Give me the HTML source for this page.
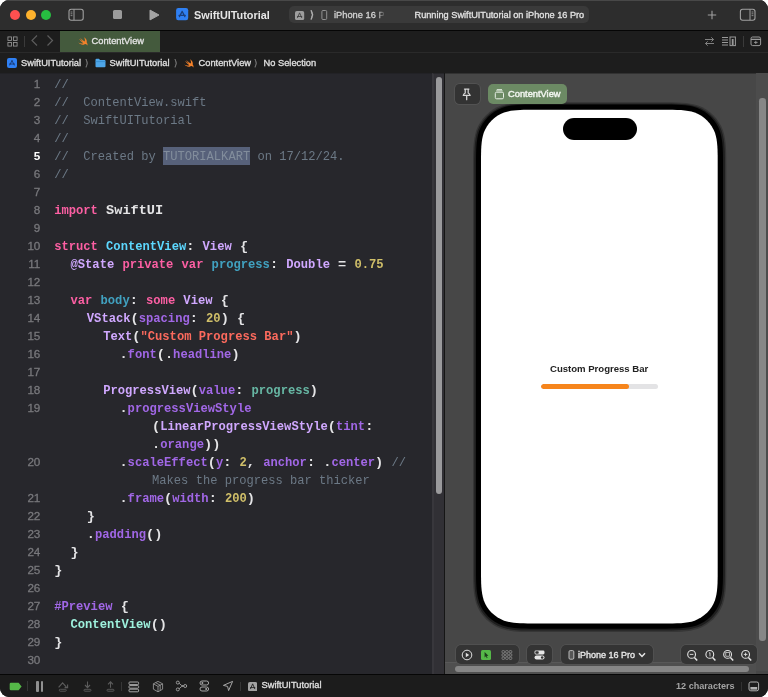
<!DOCTYPE html>
<html><head><meta charset="utf-8">
<style>
html,body{margin:0;padding:0;background:#fff;}
body{width:768px;height:697px;overflow:hidden;position:relative;font-family:"Liberation Sans",sans-serif;}
#win{position:absolute;left:0;top:0;width:768px;height:697px;border-radius:9px;overflow:hidden;background:#1c1c1c;}
.abs{position:absolute;}
#title{left:0;top:0;width:768px;height:30px;background:#2d2d2d;border-top:1px solid #484848;box-sizing:border-box}
#tsep{left:0;top:30px;width:768px;height:1px;background:#050505;}
#tabbar{left:0;top:31px;width:768px;height:21px;background:#1d1d1d;}
#tab{left:59.5px;top:31px;width:100.5px;height:21px;background:#445a3d;}
#crumb{left:0;top:52px;width:768px;height:21px;background:#1d1d1d;border-top:1px solid #2a2a2a;box-sizing:border-box;}
#editor{left:0;top:73px;width:432px;height:600.5px;background:#27272c;border-top:1px solid #222226;box-sizing:border-box}
#gutter2{left:432px;top:73px;width:12.5px;height:600.5px;background:#313035;border-top:1px solid #262629;border-left:2px solid #38373c;box-sizing:border-box}
#split{left:444.3px;top:73px;width:1px;height:600.5px;background:#161616;}
#canvas{left:445px;top:73px;width:323px;height:600.5px;background:#474747;border-top:1px solid #323232;box-sizing:border-box}
#bottom{left:0;top:673.5px;width:768px;height:23.5px;background:#1c1c1c;border-top:1px solid #060606;box-sizing:border-box}
.t{position:absolute;white-space:pre;line-height:1;-webkit-text-stroke-width:0.3px}
pre{margin:0;}
#code{left:0;top:76px;font-family:"Liberation Mono",monospace;font-size:12px;line-height:18px;color:#dfdfe0;position:absolute;}
.ln{position:absolute;left:0;width:39.9px;text-align:right;color:#78787c;font-family:"Liberation Sans",sans-serif;font-size:11.7px;line-height:18px;letter-spacing:-0.25px;margin-top:-0.8px;-webkit-text-stroke-width:0.3px}
.cl{margin-top:0px;position:absolute;left:54.2px;white-space:pre;font-family:"Liberation Mono",monospace;font-size:13.6px;line-height:18px;color:#e4e4e6;font-weight:bold}
.cl span{font-size:12.15px}
.cl span.c{font-size:12.1px}
.cl span span{font-size:inherit}
.k{color:#fc5fa3;font-weight:bold}
.c{color:#6c7986;font-weight:normal}
.s{color:#fc6a5d}
.n{color:#d0bf69}
.td{color:#5dd8ff}
.od{color:#41a1c0}
.pt{color:#9ef1dd}
.pv{color:#67b7a4}
.st{color:#d0a8ff}
.sf{color:#a167e6}
.pp{color:#fd8f3f}
.b{font-weight:bold}
.sel{color:#828d9c}
.cur{color:#fff !important;font-weight:bold;-webkit-text-stroke-width:0 !important}
.pp2{color:#a167e6}
.tb{background:#343434;border-radius:5px;box-shadow:0 0 0 0.8px #545454}
.t,.cl,.ln{will-change:opacity}
</style></head><body>
<div id="win">
<div class="abs" id="title"></div>
<div class="abs" id="tsep"></div>
<div class="abs" id="tabbar"></div>
<div class="abs" id="tab"></div>
<div class="abs" id="crumb"></div>
<div class="abs" id="editor"></div>
<div class="abs" id="gutter2"></div>
<div class="abs" id="split"></div>
<div class="abs" id="canvas"></div>
<div class="abs" id="bottom"></div>
<!-- traffic lights -->
<div class="abs" style="left:10px;top:10px;width:10px;height:10px;border-radius:50%;background:#fe5050"></div>
<div class="abs" style="left:26px;top:10px;width:10px;height:10px;border-radius:50%;background:#fdb12d"></div>
<div class="abs" style="left:41px;top:10px;width:10px;height:10px;border-radius:50%;background:#27bd41"></div>
<!-- sidebar icon -->
<svg class="abs" style="left:67.7px;top:8px" width="17" height="14" viewBox="0 0 17 14"><rect x="1" y="1.2" width="14.2" height="11" rx="2.2" fill="none" stroke="#a0a0a0" stroke-width="1.1"/><line x1="6" y1="1.2" x2="6" y2="12.2" stroke="#a0a0a0" stroke-width="1"/><line x1="2.6" y1="4" x2="4.4" y2="4" stroke="#a0a0a0" stroke-width="0.8"/><line x1="2.6" y1="5.8" x2="4.4" y2="5.8" stroke="#a0a0a0" stroke-width="0.8"/><line x1="2.6" y1="7.6" x2="4.4" y2="7.6" stroke="#a0a0a0" stroke-width="0.8"/></svg>
<!-- stop -->
<div class="abs" style="left:113px;top:10.2px;width:9.2px;height:9.3px;border-radius:1.5px;background:#9b9b9b"></div>
<!-- play -->
<svg class="abs" style="left:148px;top:8px" width="14" height="14" viewBox="0 0 14 14"><path d="M2 2.1 L11 7 L2 11.9 Z" fill="#a3a3a3" stroke="#a3a3a3" stroke-width="1" stroke-linejoin="round"/></svg>
<!-- app icon -->
<svg class="abs" style="left:176px;top:8.3px" width="13" height="13" viewBox="0 0 13 13"><rect x="0.1" y="0.1" width="12.1" height="12.1" rx="2.2" fill="#2f80f3"/><path d="M6.15 3.4 L3.4 8.6 M6.15 3.4 L8.9 8.6 M3 7.4 L9.3 7.4" stroke="#1b3f7c" stroke-width="1.2" fill="none" stroke-linecap="round"/></svg>
<div class="t" style="left:194px;top:10px;font-size:10.85px;font-weight:bold;-webkit-text-stroke-width:0;color:#e6e6e6;">SwiftUITutorial</div>
<!-- scheme pill -->
<div class="abs" style="left:288.5px;top:6px;width:300.5px;height:17px;border-radius:5px;background:#3a3a3a"></div>
<svg class="abs" style="left:295.4px;top:10.6px" width="9.2" height="9.2" viewBox="0 0 10 10"><rect x="0" y="0" width="10" height="10" rx="2" fill="#9e9e9e"/><path d="M5 2 L2.6 7.6 M5 2 L7.4 7.6 M2.2 6 L7.8 6" stroke="#3a3a3a" stroke-width="0.9" fill="none"/></svg>
<div class="t" style="left:310px;top:10px;font-size:9.5px;color:#b4b4b4;-webkit-text-stroke-width:0.5px">⟩</div>
<svg class="abs" style="left:321px;top:10px" width="7" height="10" viewBox="0 0 7 10"><rect x="0.9" y="0.5" width="4.8" height="9" rx="1.1" fill="none" stroke="#9c9c9c" stroke-width="0.9"/></svg>
<div class="abs" style="left:334px;top:7px;width:50px;height:16px;overflow:hidden;-webkit-mask-image:linear-gradient(90deg,#000 86%,rgba(0,0,0,0.2) 100%);mask-image:linear-gradient(90deg,#000 86%,rgba(0,0,0,0.2) 100%)"><div class="t" style="left:0;top:3.5px;font-size:9.3px;color:#d2d2d2;">iPhone 16 Pro</div></div>
<div class="t" style="left:414.5px;top:10.5px;font-size:9.2px;color:#e2e2e2;">Running SwiftUITutorial on iPhone 16 Pro</div>
<!-- plus -->
<svg class="abs" style="left:707px;top:10px" width="10" height="10" viewBox="0 0 10 10"><path d="M5 0.8 V9.2 M0.8 5 H9.2" stroke="#a0a0a0" stroke-width="1.1"/></svg>
<!-- right sidebar icon -->
<svg class="abs" style="left:739px;top:8px" width="18" height="14" viewBox="0 0 18 14"><rect x="1.4" y="1.2" width="14.6" height="11" rx="2.2" fill="none" stroke="#a0a0a0" stroke-width="1.1"/><line x1="11" y1="1.2" x2="11" y2="12.2" stroke="#a0a0a0" stroke-width="1"/><line x1="12.6" y1="4" x2="14.4" y2="4" stroke="#a0a0a0" stroke-width="0.8"/><line x1="12.6" y1="5.8" x2="14.4" y2="5.8" stroke="#a0a0a0" stroke-width="0.8"/><line x1="12.6" y1="7.6" x2="14.4" y2="7.6" stroke="#a0a0a0" stroke-width="0.8"/></svg>

<!-- tab bar -->
<svg class="abs" style="left:6.6px;top:35.7px" width="11" height="11" viewBox="0 0 12 12"><g fill="none" stroke="#9a9a9a" stroke-width="0.9"><rect x="1" y="1" width="4" height="4"/><rect x="7" y="1" width="4" height="4"/><rect x="1" y="7" width="4" height="4"/><rect x="7" y="7" width="4" height="4"/></g></svg>
<div class="abs" style="left:24px;top:36px;width:1px;height:11px;background:#3a3a3a"></div>
<svg class="abs" style="left:30px;top:34px" width="26" height="13" viewBox="0 0 26 13"><path d="M7 1.5 L2 6.5 L7 11.5 M17.5 1.5 L22.5 6.5 L17.5 11.5" fill="none" stroke="#5c5c5c" stroke-width="1.2"/></svg>
<svg class="abs swift" style="left:78.3px;top:37px" width="10" height="9" viewBox="0 0 10 9"><path d="M0.3 5.6 C2.2 7.6 4.8 8.3 6.6 7.2 C7.6 6.9 8.6 7.4 9.4 8.4 C9.7 7.2 9.3 6.2 8.7 5.5 C9.3 3.4 8 1.3 6 0.2 C7 1.8 7.2 3.3 6.7 4.5 C5.2 3.6 3.4 2.2 2 0.8 C2.9 2.3 4 3.6 5.2 4.8 C3.8 4 2.2 2.9 1 1.8 C2.2 3.6 3.6 5 5.4 6.3 C3.8 6.9 1.9 6.6 0.3 5.6 Z" fill="#f5822a"/></svg>
<div class="t" style="left:91.5px;top:37px;font-size:9.3px;color:#e4e4e4;">ContentView</div>
<!-- tab bar right icons -->
<svg class="abs" style="left:703px;top:36px" width="13" height="11" viewBox="0 0 13 11"><path d="M2 3.5 H10.5 M8.3 1.3 L10.5 3.5 L8.3 5.7 M11 7.5 H2.5 M4.7 5.3 L2.5 7.5 L4.7 9.7" fill="none" stroke="#8c8c8c" stroke-width="0.9"/></svg>
<svg class="abs" style="left:721px;top:36px" width="16" height="11" viewBox="0 0 16 11"><path d="M1 1.5 H7 M1 4 H7 M1 6.5 H7 M1 9 H7" stroke="#9a9a9a" stroke-width="1"/><rect x="9" y="1" width="5.4" height="8.6" fill="none" stroke="#9a9a9a" stroke-width="1"/><rect x="10.8" y="3" width="1.8" height="6" fill="#9a9a9a"/></svg>
<div class="abs" style="left:743px;top:36px;width:1px;height:11px;background:#3a3a3a"></div>
<svg class="abs" style="left:750px;top:36px" width="12" height="11" viewBox="0 0 12 11"><rect x="1" y="1" width="9.6" height="8.6" rx="1.6" fill="none" stroke="#9a9a9a" stroke-width="1"/><path d="M1 3.4 H10.6" stroke="#9a9a9a" stroke-width="1.2"/><path d="M4 6.4 H7.6 M5.8 4.8 V8" stroke="#9a9a9a" stroke-width="0.9"/></svg>

<!-- breadcrumb -->
<svg class="abs" style="left:7px;top:58px" width="10" height="10" viewBox="0 0 10 10"><rect x="0" y="0" width="10" height="10" rx="2" fill="#2f80f3"/><path d="M5 2.6 L2.8 7 M5 2.6 L7.2 7 M2.4 6 L7.6 6" stroke="#1b3f7c" stroke-width="1" fill="none" stroke-linecap="round"/></svg>
<div class="t" style="left:21px;top:58.5px;font-size:9.3px;color:#e0e0e0;">SwiftUITutorial</div>
<div class="t" style="left:85px;top:58.5px;font-size:9px;color:#7a7a7a;">⟩</div>
<svg class="abs" style="left:95px;top:58px" width="11" height="10" viewBox="0 0 11 10"><path d="M0.5 1.8 Q0.5 0.8 1.5 0.8 H4 L5 2 H9.5 Q10.5 2 10.5 3 V8.2 Q10.5 9.2 9.5 9.2 H1.5 Q0.5 9.2 0.5 8.2 Z" fill="#4ea6e8"/><path d="M0.5 3.6 H10.5" stroke="#2a7fc0" stroke-width="0.6"/></svg>
<div class="t" style="left:109.5px;top:58.5px;font-size:9.3px;color:#e0e0e0;">SwiftUITutorial</div>
<div class="t" style="left:174px;top:58.5px;font-size:9px;color:#7a7a7a;">⟩</div>
<svg class="abs swift" style="left:184px;top:59px" width="10" height="9" viewBox="0 0 10 9"><path d="M0.3 5.6 C2.2 7.6 4.8 8.3 6.6 7.2 C7.6 6.9 8.6 7.4 9.4 8.4 C9.7 7.2 9.3 6.2 8.7 5.5 C9.3 3.4 8 1.3 6 0.2 C7 1.8 7.2 3.3 6.7 4.5 C5.2 3.6 3.4 2.2 2 0.8 C2.9 2.3 4 3.6 5.2 4.8 C3.8 4 2.2 2.9 1 1.8 C2.2 3.6 3.6 5 5.4 6.3 C3.8 6.9 1.9 6.6 0.3 5.6 Z" fill="#f5822a"/></svg>
<div class="t" style="left:198.5px;top:58.5px;font-size:9.3px;color:#e0e0e0;">ContentView</div>
<div class="t" style="left:254px;top:58.5px;font-size:9px;color:#7a7a7a;">⟩</div>
<div class="t" style="left:263.5px;top:58.5px;font-size:9.3px;color:#e0e0e0;">No Selection</div>

<!-- selection -->
<div class="abs" style="left:163.2px;top:147px;width:87px;height:18px;background:#57617a"></div>

<div class="ln" style="top:76px">1</div>
<div class="cl" style="top:76px"><span class="c">//</span></div>
<div class="ln" style="top:94px">2</div>
<div class="cl" style="top:94px"><span class="c">//  ContentView.swift</span></div>
<div class="ln" style="top:112px">3</div>
<div class="cl" style="top:112px"><span class="c">//  SwiftUITutorial</span></div>
<div class="ln" style="top:130px">4</div>
<div class="cl" style="top:130px"><span class="c">//</span></div>
<div class="ln cur" style="top:148px">5</div>
<div class="cl" style="top:148px"><span class="c">//  Created by <span class="sel">TUTORIALKART</span> on 17/12/24.</span></div>
<div class="ln" style="top:166px">6</div>
<div class="cl" style="top:166px"><span class="c">//</span></div>
<div class="ln" style="top:184px">7</div>
<div class="ln" style="top:202px">8</div>
<div class="cl" style="top:202px"><span class="k">import</span> SwiftUI</div>
<div class="ln" style="top:220px">9</div>
<div class="ln" style="top:238px">10</div>
<div class="cl" style="top:238px"><span class="k">struct</span> <span class="td">ContentView</span>: <span class="st">View</span> {</div>
<div class="ln" style="top:256px">11</div>
<div class="cl" style="top:256px">  <span class="st">@State</span> <span class="k">private</span> <span class="k">var</span> <span class="od">progress</span>: <span class="st">Double</span> = <span class="n">0.75</span></div>
<div class="ln" style="top:274px">12</div>
<div class="ln" style="top:292px">13</div>
<div class="cl" style="top:292px">  <span class="k">var</span> <span class="od">body</span>: <span class="k">some</span> <span class="st">View</span> {</div>
<div class="ln" style="top:310px">14</div>
<div class="cl" style="top:310px">    <span class="st">VStack</span>(<span class="sf">spacing</span>: <span class="n">20</span>) {</div>
<div class="ln" style="top:328px">15</div>
<div class="cl" style="top:328px">      <span class="st">Text</span>(<span class="s">"Custom Progress Bar"</span>)</div>
<div class="ln" style="top:346px">16</div>
<div class="cl" style="top:346px">        .<span class="sf">font</span>(.<span class="sf">headline</span>)</div>
<div class="ln" style="top:364px">17</div>
<div class="ln" style="top:382px">18</div>
<div class="cl" style="top:382px">      <span class="st">ProgressView</span>(<span class="sf">value</span>: <span class="pv">progress</span>)</div>
<div class="ln" style="top:400px">19</div>
<div class="cl" style="top:400px">        .<span class="sf">progressViewStyle</span></div>
<div class="cl" style="top:418px">            (<span class="st">LinearProgressViewStyle</span>(<span class="sf">tint</span>:</div>
<div class="cl" style="top:436px">            .<span class="sf">orange</span>))</div>
<div class="ln" style="top:454px">20</div>
<div class="cl" style="top:454px">        .<span class="sf">scaleEffect</span>(<span class="sf">y</span>: <span class="n">2</span>, <span class="sf">anchor</span>: .<span class="sf">center</span>) <span class="c">//</span></div>
<div class="cl" style="top:472px">            <span class="c">Makes the progress bar thicker</span></div>
<div class="ln" style="top:490px">21</div>
<div class="cl" style="top:490px">        .<span class="sf">frame</span>(<span class="sf">width</span>: <span class="n">200</span>)</div>
<div class="ln" style="top:508px">22</div>
<div class="cl" style="top:508px">    }</div>
<div class="ln" style="top:526px">23</div>
<div class="cl" style="top:526px">    .<span class="sf">padding</span>()</div>
<div class="ln" style="top:544px">24</div>
<div class="cl" style="top:544px">  }</div>
<div class="ln" style="top:562px">25</div>
<div class="cl" style="top:562px">}</div>
<div class="ln" style="top:580px">26</div>
<div class="ln" style="top:598px">27</div>
<div class="cl" style="top:598px"><span class="pp2">#Preview</span> {</div>
<div class="ln" style="top:616px">28</div>
<div class="cl" style="top:616px">  <span class="pt">ContentView</span>()</div>
<div class="ln" style="top:634px">29</div>
<div class="cl" style="top:634px">}</div>
<div class="ln" style="top:652px">30</div>
<!-- editor scrollbar -->
<div class="abs" style="left:435.6px;top:77px;width:6.5px;height:416.5px;border-radius:3.25px;background:#9a9a9c"></div>

<!-- phone -->
<svg class="abs" style="left:470px;top:100px" width="260" height="536" viewBox="0 0 260 536"><path d="M71.03 2.20 L188.27 2.20 C207.86 2.20 217.66 2.20 228.20 5.53 C239.71 9.72 248.78 18.79 252.97 30.30 C256.30 40.84 256.30 50.64 256.30 70.23 L256.30 463.97 C256.30 483.56 256.30 493.36 252.97 503.90 C248.78 515.41 239.71 524.48 228.20 528.67 C217.66 532.00 207.86 532.00 188.27 532.00 L71.03 532.00 C51.44 532.00 41.64 532.00 31.10 528.67 C19.59 524.48 10.52 515.41 6.33 503.90 C3.00 493.36 3.00 483.56 3.00 463.97 L3.00 70.23 C3.00 50.64 3.00 40.84 6.33 30.30 C10.52 18.79 19.59 9.72 31.10 5.53 C41.64 2.20 51.44 2.20 71.03 2.20 Z" fill="#363636"/><path d="M70.80 3.40 L188.40 3.40 C207.55 3.40 217.12 3.40 227.43 6.66 C238.68 10.75 247.55 19.62 251.64 30.87 C254.90 41.18 254.90 50.75 254.90 69.90 L254.90 464.10 C254.90 483.25 254.90 492.82 251.64 503.13 C247.55 514.38 238.68 523.25 227.43 527.34 C217.12 530.60 207.55 530.60 188.40 530.60 L70.80 530.60 C51.65 530.60 42.08 530.60 31.77 527.34 C20.52 523.25 11.65 514.38 7.56 503.13 C4.30 492.82 4.30 483.25 4.30 464.10 L4.30 69.90 C4.30 50.75 4.30 41.18 7.56 30.87 C11.65 19.62 20.52 10.75 31.77 6.66 C42.08 3.40 51.65 3.40 70.80 3.40 Z" fill="#1e1e1e"/><path d="M69.90 4.50 L189.10 4.50 C207.50 4.50 216.70 4.50 226.60 7.63 C237.42 11.57 245.93 20.08 249.87 30.90 C253.00 40.80 253.00 50.00 253.00 68.40 L253.00 464.80 C253.00 483.20 253.00 492.40 249.87 502.30 C245.93 513.12 237.42 521.63 226.60 525.57 C216.70 528.70 207.50 528.70 189.10 528.70 L69.90 528.70 C51.50 528.70 42.30 528.70 32.40 525.57 C21.58 521.63 13.07 513.12 9.13 502.30 C6.00 492.40 6.00 483.20 6.00 464.80 L6.00 68.40 C6.00 50.00 6.00 40.80 9.13 30.90 C13.07 20.08 21.58 11.57 32.40 7.63 C42.30 4.50 51.50 4.50 69.90 4.50 Z" fill="#000"/><path d="M66.80 9.80 L191.90 9.80 C207.97 9.80 216.00 9.80 224.65 12.53 C234.09 15.97 241.53 23.41 244.97 32.85 C247.70 41.50 247.70 49.53 247.70 65.60 L247.70 467.60 C247.70 483.67 247.70 491.70 244.97 500.35 C241.53 509.79 234.09 517.23 224.65 520.67 C216.00 523.40 207.97 523.40 191.90 523.40 L66.80 523.40 C50.73 523.40 42.70 523.40 34.05 520.67 C24.61 517.23 17.17 509.79 13.73 500.35 C11.00 491.70 11.00 483.67 11.00 467.60 L11.00 65.60 C11.00 49.53 11.00 41.50 13.73 32.85 C17.17 23.41 24.61 15.97 34.05 12.53 C42.70 9.80 50.73 9.80 66.80 9.80 Z" fill="#fff"/></svg>
<div class="abs" style="left:562.5px;top:118px;width:74px;height:22px;border-radius:11px;background:#000;"></div>
<div class="t" style="left:550px;top:363.6px;font-size:9.6px;font-weight:bold;-webkit-text-stroke-width:0;letter-spacing:-0.02px;color:#222;">Custom Progress Bar</div>
<div class="abs" style="left:540.6px;top:384.2px;width:117.8px;height:5px;border-radius:2.5px;background:#e3e3e5;overflow:hidden"><div style="width:75.4%;height:100%;background:#f6851c;border-radius:2.5px"></div></div>
<!-- preview: pin -->
<div class="abs" style="left:455.3px;top:84px;width:24.8px;height:19.8px;border-radius:4.5px;background:#333;box-shadow:0 0 0 0.7px #575757"></div>
<svg class="abs" style="left:461.3px;top:87.8px" width="11.4" height="13" viewBox="0 0 12 14"><path d="M3.6 1.2 H8.4 M4.4 1.2 V5.4 M7.6 1.2 V5.4 M4.4 5.4 Q2.6 6.2 2.4 8 H9.6 Q9.4 6.2 7.6 5.4 M6 8 V12.6" fill="none" stroke="#d6d6d6" stroke-width="1.35" stroke-linecap="round"/></svg>
<!-- ContentView chip -->
<div class="abs" style="left:488px;top:84px;width:79px;height:20px;border-radius:5px;background:#6c8a64"></div>
<svg class="abs" style="left:494px;top:88px" width="11" height="12" viewBox="0 0 11 12"><rect x="1.3" y="4.2" width="8.2" height="6.6" rx="1.3" fill="none" stroke="#e8efe6" stroke-width="1"/><path d="M2.2 2.8 H8.6 M2.8 1.5 H8" stroke="#dfe8dc" stroke-width="0.9"/></svg>
<div class="t" style="left:508px;top:89.5px;font-size:9.3px;-webkit-text-stroke-width:0.45px;color:#f0f4ee;">ContentView</div>
<!-- canvas scrollbar -->
<div class="abs" style="left:756px;top:73px;width:12px;height:598px;background:#4c4c4c"></div>
<div class="abs" style="left:759px;top:98px;width:6.5px;height:543px;border-radius:3.2px;background:#878787"></div>
<!-- bottom horizontal scrollbar -->
<div class="abs" style="left:445px;top:662px;width:311px;height:11.5px;background:#4f4f4f;border-top:1px solid #585858;box-sizing:border-box"></div>
<div class="abs" style="left:454.5px;top:665.7px;width:294px;height:6.3px;border-radius:3.2px;background:#868686"></div>
<!-- bottom toolbar groups -->
<div class="abs tb" style="left:455.5px;top:645.2px;width:63.5px;height:19px;"></div>
<div class="abs tb" style="left:527px;top:645.2px;width:24.5px;height:19px;"></div>
<div class="abs tb" style="left:560.5px;top:645.2px;width:92px;height:19px;"></div>
<div class="abs tb" style="left:681px;top:645.2px;width:76px;height:19px;"></div>
<!-- play circle -->
<svg class="abs" style="left:461px;top:649px" width="12" height="12" viewBox="0 0 12 12"><circle cx="6" cy="6" r="4.8" fill="none" stroke="#e0e0e0" stroke-width="1"/><path d="M4.8 3.8 L8.2 6 L4.8 8.2 Z" fill="#e0e0e0"/></svg>
<!-- green cursor -->
<div class="abs" style="left:481.2px;top:650px;width:9.5px;height:9.5px;border-radius:1.5px;background:#55b848"></div>
<svg class="abs" style="left:481px;top:650px" width="10" height="10" viewBox="0 0 10 10"><path d="M3.6 2 L3.6 7.4 L4.9 6.2 L5.8 8.2 L6.6 7.8 L5.7 5.9 L7.4 5.8 Z" fill="#1d3d1d"/></svg>
<!-- grid -->
<svg class="abs" style="left:501px;top:650px" width="12" height="10" viewBox="0 0 12 10"><g fill="none" stroke="#8e8e8e" stroke-width="0.8"><rect x="1" y="0.6" width="2.6" height="2.4" rx="0.8"/><rect x="4.6" y="0.6" width="2.6" height="2.4" rx="0.8"/><rect x="8.2" y="0.6" width="2.6" height="2.4" rx="0.8"/><rect x="1" y="3.8" width="2.6" height="2.4" rx="0.8"/><rect x="4.6" y="3.8" width="2.6" height="2.4" rx="0.8"/><rect x="8.2" y="3.8" width="2.6" height="2.4" rx="0.8"/><rect x="1" y="7" width="2.6" height="2.4" rx="0.8"/><rect x="4.6" y="7" width="2.6" height="2.4" rx="0.8"/><rect x="8.2" y="7" width="2.6" height="2.4" rx="0.8"/></g></svg>
<!-- toggles -->
<svg class="abs" style="left:534px;top:650px" width="11" height="10" viewBox="0 0 11 10"><rect x="0.5" y="0.5" width="10" height="4" rx="1.4" fill="#e6e6e6"/><rect x="0.5" y="5.5" width="10" height="4" rx="2" fill="#e6e6e6"/><rect x="1.3" y="1.2" width="3.4" height="2.6" rx="0.8" fill="#333"/><circle cx="8.2" cy="7.5" r="1.3" fill="#333"/></svg>
<!-- phone small -->
<svg class="abs" style="left:567.5px;top:650px" width="7" height="10" viewBox="0 0 7 10"><rect x="1" y="0.6" width="4.8" height="8.6" rx="1.2" fill="#555" stroke="#c8c8c8" stroke-width="0.9"/></svg>
<div class="t" style="left:578px;top:650.5px;font-size:9px;color:#ececec;">iPhone 16 Pro</div>
<svg class="abs" style="left:638px;top:652px" width="8" height="6" viewBox="0 0 8 6"><path d="M1 1.2 L4 4.4 L7 1.2" fill="none" stroke="#e6e6e6" stroke-width="1.5"/></svg>
<!-- zoom icons -->
<svg class="abs" style="left:686px;top:649px" width="68" height="13" viewBox="0 0 68 13"><g fill="none" stroke="#e4e4e4" stroke-width="1.1"><circle cx="5.6" cy="5.4" r="3.9"/><path d="M8.4 8.4 L11.2 11.4" stroke-width="1.5"/><path d="M3.8 5.4 H7.4" stroke-width="0.9"/>
<circle cx="23.8" cy="5.4" r="3.9"/><path d="M26.6 8.4 L29.4 11.4" stroke-width="1.5"/><path d="M23 4.2 L24 3.6 V7.4" stroke-width="0.8"/>
<circle cx="41.6" cy="5.4" r="3.9"/><path d="M44.4 8.4 L47.2 11.4" stroke-width="1.5"/><rect x="39.8" y="3.6" width="3.6" height="3.6" stroke-width="0.7"/>
<circle cx="59.6" cy="5.4" r="3.9"/><path d="M62.4 8.4 L65.2 11.4" stroke-width="1.5"/><path d="M57.8 5.4 H61.4 M59.6 3.6 V7.2" stroke-width="0.9"/></g></svg>

<!-- bottom status bar -->
<svg class="abs" style="left:8.5px;top:682px" width="14" height="10" viewBox="0 0 14 10"><path d="M1.9 0.8 H9.6 L12.6 4.5 L9.6 8.2 H1.9 Q0.7 8.2 0.7 7 V2 Q0.7 0.8 1.9 0.8 Z" fill="#55b848"/></svg>
<div class="abs" style="left:26.5px;top:681px;width:1px;height:9.5px;background:#363636"></div>
<div class="abs" style="left:36px;top:681px;width:2.6px;height:11px;border-radius:1px;background:#909090"></div>
<div class="abs" style="left:40.6px;top:681px;width:2.6px;height:11px;border-radius:1px;background:#909090"></div>
<svg class="abs" style="left:57px;top:680px" width="13" height="13" viewBox="0 0 13 13"><path d="M1.6 7.4 L5.6 2.8 L9.4 7.2 M10.6 4.6 V7.6 H7.6" fill="none" stroke="#5c5c5c" stroke-width="1.1"/><rect x="2.3" y="9.3" width="7" height="1.9" rx="0.9" fill="none" stroke="#5c5c5c" stroke-width="0.9"/></svg>
<svg class="abs" style="left:81.5px;top:680px" width="11" height="13" viewBox="0 0 11 13"><path d="M5.5 1.6 V7.4 M3 5 L5.5 7.6 L8 5" fill="none" stroke="#5c5c5c" stroke-width="1.1"/><rect x="2" y="9.3" width="7" height="1.9" rx="0.9" fill="none" stroke="#5c5c5c" stroke-width="0.9"/></svg>
<svg class="abs" style="left:104.7px;top:680px" width="11" height="13" viewBox="0 0 11 13"><path d="M5.5 7.8 V1.8 M3 4.4 L5.5 1.8 L8 4.4" fill="none" stroke="#5c5c5c" stroke-width="1.1"/><rect x="2" y="9.3" width="7" height="1.9" rx="0.9" fill="none" stroke="#5c5c5c" stroke-width="0.9"/></svg>
<div class="abs" style="left:121px;top:681.5px;width:1px;height:9.5px;background:#363636"></div>
<svg class="abs" style="left:128.3px;top:680.7px" width="12" height="12" viewBox="0 0 12 12"><g fill="none" stroke="#a6a6a6" stroke-width="1"><rect x="1" y="1" width="9.6" height="2.6" rx="0.8"/><rect x="1" y="4.6" width="9.6" height="2.6" rx="0.8"/><rect x="1" y="8.2" width="9.6" height="2.6" rx="0.8"/></g></svg>
<svg class="abs" style="left:152px;top:680px" width="12" height="13" viewBox="0 0 12 13"><path d="M6 1.4 L10.6 3.8 V9.2 L6 11.8 L1.4 9.2 V3.8 Z M1.4 3.8 L6 6.4 L10.6 3.8 M6 6.4 V11.8 M3.6 2.7 L8.2 5.2 V10.4" fill="none" stroke="#9c9c9c" stroke-width="0.85" stroke-linejoin="round"/></svg>
<svg class="abs" style="left:175px;top:680px" width="13" height="12" viewBox="0 0 13 12"><g fill="none" stroke="#a6a6a6" stroke-width="0.9"><circle cx="2.8" cy="2.6" r="1.5"/><circle cx="2.8" cy="9.4" r="1.5"/><circle cx="10.2" cy="6" r="1.5"/><path d="M4.2 3.2 Q6 6 8.7 6 M4.2 8.8 Q6 6 8.7 6"/></g></svg>
<svg class="abs" style="left:199px;top:680px" width="11" height="12" viewBox="0 0 11 12"><g fill="none" stroke="#a6a6a6" stroke-width="1"><rect x="1" y="1" width="8.6" height="4" rx="2"/><rect x="1" y="7" width="8.6" height="4" rx="2"/></g><circle cx="3.4" cy="3" r="1" fill="#a6a6a6"/><circle cx="7.2" cy="9" r="1" fill="#a6a6a6"/></svg>
<svg class="abs" style="left:222px;top:680px" width="12" height="12" viewBox="0 0 12 12"><path d="M10.6 1.4 L1.4 5.4 L5.6 6.4 L6.6 10.6 Z" fill="none" stroke="#a6a6a6" stroke-width="1" stroke-linejoin="round"/></svg>
<div class="abs" style="left:240px;top:681.5px;width:1px;height:9.5px;background:#363636"></div>
<svg class="abs" style="left:247.7px;top:681.6px" width="9.3" height="9.3" viewBox="0 0 10 10"><rect x="0" y="0" width="10" height="10" rx="2" fill="#a2a2a2"/><path d="M5 2 L2.6 7.6 M5 2 L7.4 7.6 M2.2 6 L7.8 6" stroke="#1c1c1c" stroke-width="0.9" fill="none"/></svg>
<div class="t" style="left:261.5px;top:681.3px;font-size:9.3px;color:#e0e0e0;">SwiftUITutorial</div>
<div class="t" style="left:676px;top:682.3px;font-size:9.1px;font-weight:bold;-webkit-text-stroke-width:0;color:#a4a4a4;">12 characters</div>
<div class="abs" style="left:740.5px;top:681.5px;width:1px;height:9.5px;background:#323232"></div>
<svg class="abs" style="left:748px;top:681.2px" width="12" height="11" viewBox="0 0 12 11"><rect x="1" y="1" width="9.6" height="8.8" rx="1.8" fill="none" stroke="#b0b0b0" stroke-width="1"/><rect x="2.4" y="6" width="6.8" height="2.6" fill="#b0b0b0"/></svg>

</div>
</body></html>
